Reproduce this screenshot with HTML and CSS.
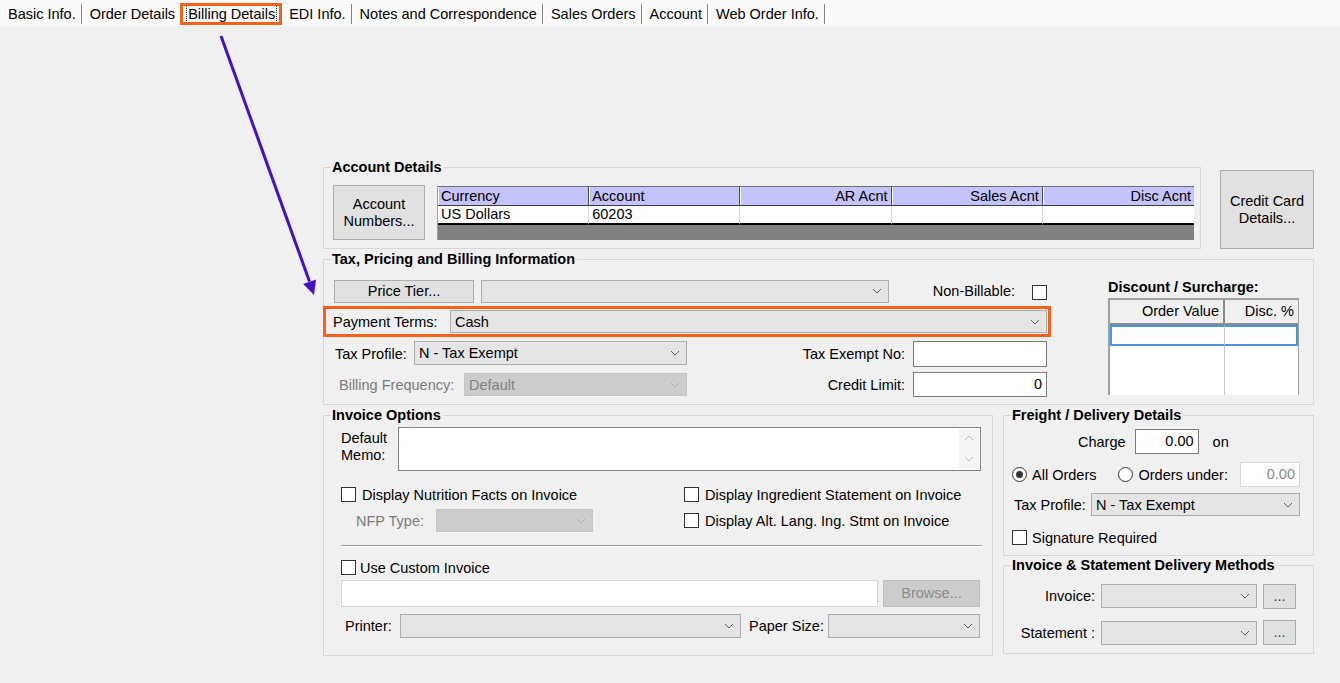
FILE: index.html
```html
<!DOCTYPE html>
<html lang="en">
<head>
  <meta charset="UTF-8">
  <meta name="viewport" content="width=device-width, initial-scale=1.0">
  <title>Customer - Billing Details</title>
  <link rel="stylesheet" href="styles.css">
</head>
<body>
  <div class="tabs">
    <span class="tab">Basic Info.</span>
    <span class="tab">Order Details</span>
    <span class="tab active"><span class="focus">Billing Details</span></span>
    <span class="tab">EDI Info.</span>
    <span class="tab">Notes and Correspondence</span>
    <span class="tab">Sales Orders</span>
    <span class="tab">Account</span>
    <span class="tab">Web Order Info.</span>
  </div>

  <div class="form">
    <div class="top-row">
      <fieldset class="group acct">
        <legend>Account Details</legend>
        <div class="acct-body">
          <button class="btn acct-btn">Account<br>Numbers...</button>
          <div class="acct-grid">
            <div class="gh">Currency</div>
            <div class="gh">Account</div>
            <div class="gh num">AR Acnt</div>
            <div class="gh num">Sales Acnt</div>
            <div class="gh num last">Disc Acnt</div>
            <div class="gc">US Dollars</div>
            <div class="gc">60203</div>
            <div class="gc"></div>
            <div class="gc"></div>
            <div class="gc last"></div>
            <div class="gfill"></div>
          </div>
        </div>
      </fieldset>
      <button class="btn cc-btn">Credit Card<br>Details...</button>
    </div>

    <fieldset class="group tax">
      <legend>Tax, Pricing and Billing Information</legend>
      <div class="tax-body">
        <div class="tax-main">
          <div class="line tier-line">
            <button class="btn tier-btn">Price Tier...</button>
            <div class="combo tier-combo"><span></span><svg class="chev" width="10" height="6" viewBox="0 0 10 6"><path d="M1 1l4 4 4-4"/></svg></div>
            <span class="nb-label">Non-Billable:</span>
            <span class="check"></span>
          </div>
          <div class="line terms-line">
            <span class="terms-label">Payment Terms:</span>
            <div class="combo terms-combo"><span>Cash</span><svg class="chev" width="10" height="6" viewBox="0 0 10 6"><path d="M1 1l4 4 4-4"/></svg></div>
          </div>
          <div class="line taxp-line">
            <span class="taxp-label">Tax Profile:</span>
            <div class="combo taxp-combo"><span>N - Tax Exempt</span><svg class="chev" width="10" height="6" viewBox="0 0 10 6"><path d="M1 1l4 4 4-4"/></svg></div>
            <span class="rlbl">Tax Exempt No:</span>
            <div class="field wide"></div>
          </div>
          <div class="line freq-line">
            <span class="freq-label dim">Billing Frequency:</span>
            <div class="combo off freq-combo"><span>Default</span><svg class="chev" width="10" height="6" viewBox="0 0 10 6"><path d="M1 1l4 4 4-4"/></svg></div>
            <span class="rlbl">Credit Limit:</span>
            <div class="field wide num">0</div>
          </div>
        </div>
        <div class="disc">
          <div class="disc-title">Discount / Surcharge:</div>
          <div class="disc-grid">
            <div class="dh">Order Value</div>
            <div class="dh">Disc. %</div>
            <div class="dsel first"></div>
            <div class="dsel second"></div>
            <div class="dc"></div>
            <div class="dc"></div>
          </div>
        </div>
      </div>
    </fieldset>

    <div class="bottom-row">
      <fieldset class="group inv">
        <legend>Invoice Options</legend>
        <div class="inv-body">
          <div class="memo-line">
            <span class="memo-label">Default<br>Memo:</span>
            <div class="memo">
              <div class="memo-scroll">
                <svg class="chev" width="10" height="6" viewBox="0 0 10 6"><path d="M1 5l4-4 4 4"/></svg>
                <svg class="chev" width="10" height="6" viewBox="0 0 10 6"><path d="M1 1l4 4 4-4"/></svg>
              </div>
            </div>
          </div>
          <div class="opts">
            <div class="opt"><span class="check"></span>Display Nutrition Facts on Invoice</div>
            <div class="opt"><span class="check"></span>Display Ingredient Statement on Invoice</div>
            <div class="opt nfp">
              <span class="nfp-label dim">NFP Type:</span>
              <div class="combo off nfp-combo"><span></span><svg class="chev" width="10" height="6" viewBox="0 0 10 6"><path d="M1 1l4 4 4-4"/></svg></div>
            </div>
            <div class="opt"><span class="check"></span>Display Alt. Lang. Ing. Stmt on Invoice</div>
          </div>
          <div class="rule"></div>
          <div class="opt custom"><span class="check"></span>Use Custom Invoice</div>
          <div class="line path-line">
            <div class="field path"></div>
            <button class="btn off browse">Browse...</button>
          </div>
          <div class="line printer-line">
            <span class="printer-label">Printer:</span>
            <div class="combo printer-combo"><span></span><svg class="chev" width="10" height="6" viewBox="0 0 10 6"><path d="M1 1l4 4 4-4"/></svg></div>
            <span class="paper-label">Paper Size:</span>
            <div class="combo paper-combo"><span></span><svg class="chev" width="10" height="6" viewBox="0 0 10 6"><path d="M1 1l4 4 4-4"/></svg></div>
          </div>
        </div>
      </fieldset>

      <div class="side">
        <fieldset class="group freight">
          <legend>Freight / Delivery Details</legend>
          <div class="freight-body">
            <div class="line charge-line">
              <span class="charge-label">Charge</span>
              <div class="field num charge">0.00</div>
              <span class="on-label">on</span>
            </div>
            <div class="line radio-line">
              <span class="radio on"></span><span class="radio-text">All Orders</span>
              <span class="radio under"></span><span class="radio-text">Orders under:</span>
              <div class="field num soft under-field">0.00</div>
            </div>
            <div class="line taxp2-line">
              <span class="taxp2-label">Tax Profile:</span>
              <div class="combo taxp2-combo"><span>N - Tax Exempt</span><svg class="chev" width="10" height="6" viewBox="0 0 10 6"><path d="M1 1l4 4 4-4"/></svg></div>
            </div>
            <div class="opt sig"><span class="check"></span>Signature Required</div>
          </div>
        </fieldset>

        <fieldset class="group delivery">
          <legend>Invoice &amp; Statement Delivery Methods</legend>
          <div class="delivery-body">
            <div class="line method-line">
              <span class="method-label">Invoice:</span>
              <div class="combo method-combo"><span></span><svg class="chev" width="10" height="6" viewBox="0 0 10 6"><path d="M1 1l4 4 4-4"/></svg></div>
              <button class="btn dots">...</button>
            </div>
            <div class="line method-line second">
              <span class="method-label">Statement :</span>
              <div class="combo method-combo"><span></span><svg class="chev" width="10" height="6" viewBox="0 0 10 6"><path d="M1 1l4 4 4-4"/></svg></div>
              <button class="btn dots">...</button>
            </div>
          </div>
        </fieldset>
      </div>
    </div>
  </div>

  <!-- pointer from the tab down to the payment terms row -->
  <svg class="arrow" width="1340" height="683" viewBox="0 0 1340 683">
    <line x1="221" y1="36" x2="309.5" y2="281.5" />
    <polygon points="314,295 316,279.5 303.2,284" />
  </svg>
</body>
</html>
```

FILE: styles.css
```css
* {
  box-sizing: border-box;
}
body {
  margin: 0;
  width: 1340px;
  height: 683px;
  overflow: hidden;
  position: relative;
  background: #f0f0f0;
  font-family: "Liberation Sans", Arial, sans-serif;
  font-size: 14.5px;
  color: #000;
}
button {
  font: inherit;
  color: inherit;
  margin: 0;
  padding: 0;
}

/* tab strip */
.tabs {
  display: flex;
  height: 26px;
  padding-top: 4px;
  background: #fafafa;
}
.tab {
  height: 20px;
  line-height: 20px;
  padding: 0 5px 0 8px;
  border-right: 1px solid #828282;
  box-shadow: 1px 0 0 #fff;
  white-space: nowrap;
}
.tab:first-child {
  padding-left: 8px;
}
.tab.active {
  padding: 0 4px 0 6px;
  outline: 3px solid #f8601c;
  outline-offset: -2px;
}
.focus {
  outline: 1px dotted #222;
  padding: 0 1px;
}

/* form body */
.form {
  padding: 133px 0 0 323px;
}
.group {
  margin: 0;
  padding: 0;
  border: 1px solid #d7d7d7;
  min-width: 0;
}
.group > legend {
  margin-left: 7px;
  padding: 0 2px 0 1px;
  font-weight: bold;
  line-height: 16px;
}
.line {
  display: flex;
  align-items: center;
}
.btn {
  background: #e1e1e1;
  border: 1px solid #adadad;
  line-height: 17px;
}
.btn.off {
  background: #cccccc;
  border-color: #bfbfbf;
  color: #8d8d8d;
}
.combo {
  display: flex;
  align-items: center;
  justify-content: space-between;
  height: 23px;
  padding: 0 6px 0 4px;
  background: #e5e5e5;
  border: 1px solid #adadad;
  white-space: nowrap;
}
.combo.off {
  background: #cccccc;
  border-color: #c4c4c4;
  color: #838383;
}
.chev {
  flex: none;
  fill: none;
  stroke: #5f5f5f;
  stroke-width: 1;
}
.combo.off .chev {
  stroke: #adadad;
}
.field {
  height: 25px;
  padding: 0 4px;
  background: #fff;
  border: 1px solid #7a7a7a;
  line-height: 23px;
}
.field.num {
  text-align: right;
}
.field.soft {
  border-color: #d9d9d9;
  color: #8a8a8a;
}
.dim {
  color: #7a7a7a;
}
.check {
  flex: none;
  display: inline-block;
  width: 15px;
  height: 15px;
  background: #fff;
  border: 1px solid #333;
}
.opt {
  display: flex;
  align-items: center;
  gap: 5px;
  white-space: nowrap;
}

/* account details */
.top-row {
  display: flex;
  align-items: flex-start;
}
.acct {
  width: 878px;
}
.acct-body {
  display: flex;
  align-items: flex-start;
  gap: 12px;
  padding: 10px 6px 8px 9px;
}
.acct-btn {
  width: 92px;
  height: 55px;
}
.acct-grid {
  flex: 1;
  margin-top: 1px;
  height: 54px;
  display: grid;
  grid-template-columns: repeat(5, 1fr);
  grid-template-rows: 20px 19px 1fr;
  border-left: 1px solid #a0a0a0;
}
.gh {
  background: #c4c4fc;
  border-top: 1px solid #6e6e6e;
  border-bottom: 1px solid #3c3c3c;
  border-right: 1px solid #4e4e4e;
  box-shadow: inset 1px 0 0 #fff;
  padding: 0 3px;
  line-height: 18px;
}
.gh.num {
  text-align: right;
}
.gc {
  background: #fff;
  border-right: 1px solid #d4d4d4;
  border-bottom: 2px solid #000;
  padding: 0 3px;
  line-height: 17px;
}
.gh.last,
.gc.last {
  border-right: none;
}
.gfill {
  grid-column: 1 / -1;
  background: #808080;
}
.cc-btn {
  width: 94px;
  height: 79px;
  margin: 11px 0 0 19px;
}

/* tax, pricing and billing */
.tax {
  width: 991px;
  margin-top: 2px;
}
.tax-body {
  display: flex;
  align-items: flex-start;
  padding: 12px 0 7px 0;
}
.tax-main {
  width: 724px;
}
.tier-line {
  height: 24px;
  padding-left: 10px;
}
.tier-btn {
  width: 140px;
  height: 23px;
  margin-top: 1px;
}
.tier-combo {
  width: 408px;
  margin-left: 7px;
}
.nb-label {
  margin-left: auto;
  margin-right: 17px;
}
.tier-line .check {
  margin-right: 1px;
  margin-top: 2px;
}
.terms-line {
  height: 25px;
  margin: 6px 0 0 2px;
  padding-right: 1px;
  outline: 3px solid #f8601c;
}
.terms-label {
  width: 124px;
  padding-left: 7px;
}
.terms-combo {
  flex: 1;
}
.taxp-line {
  height: 26px;
  margin-top: 7px;
}
.freq-line {
  height: 25px;
  margin-top: 5px;
}
.taxp-label {
  width: 90px;
  padding-left: 11px;
}
.taxp-combo {
  width: 273px;
  height: 24px;
  align-self: flex-start;
}
.freq-label {
  width: 140px;
  padding-left: 15px;
}
.freq-combo {
  width: 223px;
}
.rlbl {
  width: 226px;
  padding-right: 8px;
  text-align: right;
}
.field.wide {
  width: 134px;
  height: 100%;
}
.disc {
  width: 191px;
  margin-left: 60px;
}
.disc-title {
  font-weight: bold;
  line-height: 16px;
}
.disc-grid {
  margin-top: 3px;
  height: 97px;
  display: grid;
  grid-template-columns: 115px 1fr;
  grid-template-rows: 25px 21px 1fr;
  background: #fff;
  border: 2px solid #a0a0a0;
  border-bottom: none;
  border-right-width: 1px;
}
.dh {
  background: #f0f0f0;
  border-bottom: 2px solid #8c8c8c;
  border-right: 2px solid #8c8c8c;
  text-align: right;
  padding-right: 4px;
  line-height: 22px;
}
.dh:nth-child(2) {
  border-right: none;
}
.dsel {
  border-top: 2px solid #4a96de;
  border-bottom: 2px solid #4a96de;
}
.dsel.first {
  border-left: 2px solid #4a96de;
  border-right: 1px solid #c8c8c8;
}
.dsel.second {
  border-right: 2px solid #4a96de;
}
.dc:nth-of-type(odd) {
  border-right: 1px solid #c8c8c8;
}

/* invoice options */
.bottom-row {
  display: flex;
  align-items: flex-start;
  gap: 10px;
  margin-top: 2px;
}
.inv {
  width: 670px;
}
.inv-body {
  padding: 4px 11px 17px 17px;
}
.memo-line {
  display: flex;
  align-items: flex-start;
}
.memo-label {
  width: 57px;
  padding-top: 3px;
  line-height: 17px;
}
.memo {
  flex: 1;
  height: 44px;
  background: #fff;
  border: 1px solid #828282;
  display: flex;
  justify-content: flex-end;
}
.memo-scroll {
  width: 20px;
  margin: 1px 1px 1px 0;
  background: #f4f4f4;
  display: flex;
  flex-direction: column;
  justify-content: space-between;
  align-items: center;
  padding: 6px 0 7px;
}
.memo-scroll .chev {
  stroke: #b9b9b9;
}
.opts {
  display: grid;
  grid-template-columns: 343px 1fr;
  grid-template-rows: 15px 23px;
  row-gap: 7px;
  margin-top: 16px;
}
.opts .opt {
  gap: 6px;
}
.nfp {
  gap: 0;
}
.nfp-label {
  width: 89px;
  padding-left: 15px;
}
.nfp-combo {
  width: 157px;
}
.rule {
  margin: 13px -1px 0 0;
  height: 2px;
  border-top: 1px solid #a0a0a0;
  border-bottom: 1px solid #fff;
}
.custom {
  margin-top: 13px;
  height: 15px;
  gap: 4px;
}
.path-line {
  height: 27px;
  margin-top: 5px;
  gap: 5px;
}
.field.path {
  width: 537px;
  height: 27px;
  border-color: #d5d5d5;
}
.browse {
  width: 97px;
  height: 27px;
}
.printer-line {
  height: 24px;
  margin-top: 7px;
}
.printer-label {
  width: 59px;
  padding-left: 4px;
}
.printer-combo {
  width: 341px;
  height: 24px;
}
.paper-label {
  width: 87px;
  padding-left: 8px;
}
.paper-combo {
  width: 152px;
  height: 24px;
}

/* freight and delivery */
.side {
  width: 311px;
  display: flex;
  flex-direction: column;
  gap: 1px;
}
.freight-body {
  padding: 6px 13px 10px 8px;
}
.charge-line {
  height: 25px;
}
.charge-label {
  margin-left: 66px;
}
.field.charge {
  width: 64px;
  margin-left: 9px;
}
.on-label {
  margin-left: 14px;
}
.radio-line {
  height: 25px;
  margin-top: 8px;
}
.radio {
  flex: none;
  position: relative;
  width: 15px;
  height: 15px;
  border-radius: 50%;
  background: #fff;
  border: 1px solid #333;
}
.radio.on::after {
  content: "";
  position: absolute;
  left: 3px;
  top: 3px;
  width: 7px;
  height: 7px;
  border-radius: 50%;
  background: #333;
}
.radio.under {
  margin-left: 22px;
}
.radio-text {
  margin-left: 5px;
}
.under-field {
  width: 60px;
  margin-left: auto;
}
.taxp2-line {
  height: 23px;
  margin-top: 6px;
}
.taxp2-label {
  width: 79px;
  padding-left: 2px;
}
.taxp2-combo {
  flex: 1;
}
.sig {
  height: 15px;
  margin-top: 14px;
}
.delivery-body {
  padding: 10px 0 8px 0;
}
.method-line {
  height: 26px;
}
.method-line.second {
  height: 25px;
  margin-top: 11px;
}
.method-label {
  width: 91px;
  margin-right: 6px;
  text-align: right;
}
.method-combo {
  width: 156px;
  height: 24px;
}
.dots {
  width: 33px;
  height: 25px;
  margin-left: 6px;
  color: #444;
}

/* annotation arrow */
.arrow {
  position: absolute;
  left: 0;
  top: 0;
  pointer-events: none;
}
.arrow line {
  stroke: #4510c8;
  stroke-width: 3;
}
.arrow polygon {
  fill: #4510c8;
}
```
